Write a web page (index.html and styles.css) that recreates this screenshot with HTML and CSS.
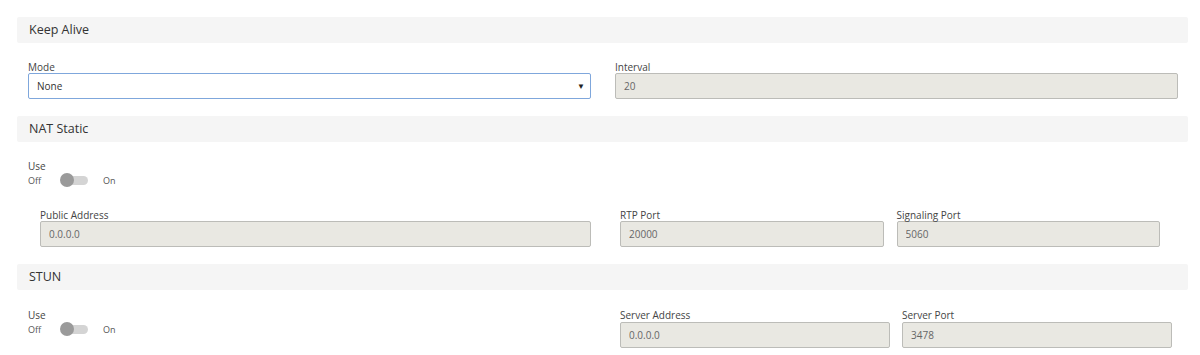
FILE: index.html
```
<!DOCTYPE html>
<html lang="en">
<head>
    <meta charset="UTF-8">
    <meta name="viewport" content="width=device-width, initial-scale=1.0">
    <title>SIP Settings</title>
    <link rel="stylesheet" href="styles.css">
</head>
<body>
    <div class="panel">
        <div class="section-head">Keep Alive</div>
        <div class="row halves">
            <div class="field">
                <label for="mode">Mode</label>
                <div class="select-wrap">
                    <select id="mode" class="select">
                        <option>None</option>
                    </select>
                    <span class="caret">&#9660;</span>
                </div>
            </div>
            <div class="field">
                <label for="interval">Interval</label>
                <input id="interval" class="input" type="text" value="20" disabled>
            </div>
        </div>

        <div class="section-head">NAT Static</div>
        <div class="row toggle-block">
            <span class="small-label">Use</span>
            <div class="switch-line">
                <span class="state">Off</span>
                <span class="switch"><span class="knob"></span></span>
                <span class="state">On</span>
            </div>
        </div>
        <div class="row nat-grid">
            <div class="field">
                <label for="public-address">Public Address</label>
                <input id="public-address" class="input" type="text" value="0.0.0.0" disabled>
            </div>
            <div class="pair nat-pair">
                <div class="field">
                    <label for="rtp-port">RTP Port</label>
                    <input id="rtp-port" class="input" type="text" value="20000" disabled>
                </div>
                <div class="field">
                    <label for="signaling-port">Signaling Port</label>
                    <input id="signaling-port" class="input" type="text" value="5060" disabled>
                </div>
            </div>
        </div>

        <div class="section-head">STUN</div>
        <div class="row stun-grid">
            <div class="toggle-block">
                <span class="small-label">Use</span>
                <div class="switch-line">
                    <span class="state">Off</span>
                    <span class="switch"><span class="knob"></span></span>
                    <span class="state">On</span>
                </div>
            </div>
            <div class="pair stun-pair">
                <div class="field">
                    <label for="server-address">Server Address</label>
                    <input id="server-address" class="input" type="text" value="0.0.0.0" disabled>
                </div>
                <div class="field">
                    <label for="server-port">Server Port</label>
                    <input id="server-port" class="input" type="text" value="3478" disabled>
                </div>
            </div>
        </div>
    </div>
</body>
</html>
```

FILE: styles.css
```
body {
    font-family: "Open Sans", "Noto Sans", sans-serif;
    margin: 0;
    padding: 17px 12px 0 17px;
    background-color: #fff;
    color: #333;
}
.panel {
    width: 1171px;
}
.section-head {
    height: 26px;
    line-height: 26px;
    padding-left: 12px;
    font-size: 12.5px;
    color: #333;
    background-color: #f5f5f5;
    border-radius: 2px;
}
.row {
    padding: 0 10px 0 11px;
}
.halves {
    display: grid;
    grid-template-columns: 1fr 1fr;
    column-gap: 24px;
    margin: 18px 0 17px;
}
.field label,
.small-label {
    display: block;
    font-size: 10px;
    line-height: 12px;
    color: #444;
}
.input,
.select {
    display: block;
    width: 100%;
    height: 26px;
    box-sizing: border-box;
    padding: 0 8px;
    font-family: inherit;
    font-size: 10px;
    border-radius: 2px;
}
.input {
    background-color: #e9e8e2;
    border: 1px solid #bcbcb8;
    color: #666;
    -webkit-text-fill-color: #666;
    opacity: 1;
}
.select-wrap {
    position: relative;
}
.select {
    appearance: none;
    -webkit-appearance: none;
    background-color: #fff;
    border: 1px solid #7fa7dc;
    color: #333;
    outline: none;
}
.caret {
    position: absolute;
    right: 6px;
    top: 8px;
    font-size: 8px;
    line-height: 10px;
    color: #222;
}
.toggle-block {
    margin-top: 18px;
}
.switch-line {
    display: flex;
    align-items: center;
    height: 14px;
    margin-top: 1px;
}
.state {
    font-size: 9px;
    color: #555;
}
.switch {
    position: relative;
    width: 28px;
    height: 14px;
    margin: 0 15px 0 19px;
}
.switch::before {
    content: "";
    position: absolute;
    left: 2px;
    right: 0;
    top: 3px;
    height: 9px;
    border-radius: 5px;
    background-color: #d4d4d4;
}
.knob {
    position: absolute;
    left: 0;
    top: 0;
    width: 14px;
    height: 14px;
    border-radius: 50%;
    background-color: #9a9a9a;
}
.nat-grid {
    display: grid;
    grid-template-columns: 551px 1fr;
    column-gap: 29px;
    padding-left: 23px;
    padding-right: 28px;
    margin: 22px 0 17px;
}
.pair {
    display: grid;
    grid-template-columns: 1fr 1fr;
}
.nat-pair {
    column-gap: 13px;
}
.stun-grid {
    display: grid;
    grid-template-columns: 1fr 552px;
    column-gap: 29px;
    padding-right: 16px;
    margin-top: 19px;
}
.stun-grid .toggle-block {
    margin-top: 0;
}
.stun-pair {
    column-gap: 12px;
}
.stun-pair .field label {
    line-height: 13px;
}
```
